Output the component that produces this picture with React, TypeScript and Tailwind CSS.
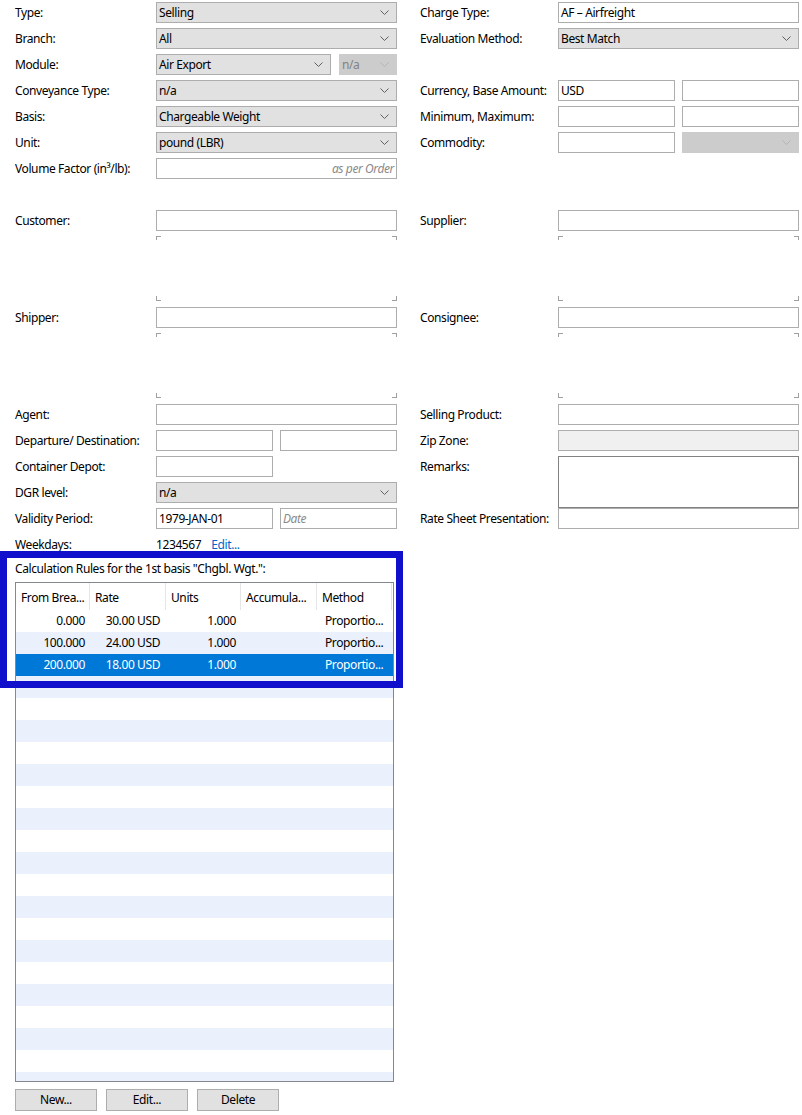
import React from "react";

const FONT = { fontFamily: '"Noto Sans", "Segoe UI", sans-serif', letterSpacing: "-0.4px" };

function Chevron({ light }: { light?: boolean }) {
    return (
        <svg width="9" height="5" viewBox="0 0 9 5" className="shrink-0">
            <path d="M0.5 0.5 L4.5 4.5 L8.5 0.5" fill="none" stroke={light ? "#b4b4b4" : "#606060"} strokeWidth="1" />
        </svg>
    );
}

function Label({ children }: { children: React.ReactNode }) {
    return <div className="w-[141px] shrink-0 h-[21px] flex items-center whitespace-nowrap">{children}</div>;
}

function RLabel({ children }: { children: React.ReactNode }) {
    return <div className="w-[138px] shrink-0 h-[21px] flex items-center whitespace-nowrap">{children}</div>;
}

function Select({ value, className = "w-[241px]" }: { value: string; className?: string }) {
    return (
        <div className={`${className} h-[21px] border border-[#adadad] bg-[#e1e1e1] flex items-center pl-[2px] pr-[7px]`}>
            <span className="flex-1 whitespace-nowrap">{value}</span>
            <Chevron />
        </div>
    );
}

function DisabledSelect({ value, className }: { value?: string; className: string }) {
    return (
        <div className={`${className} h-[21px] border border-[#cccccc] bg-[#cccccc] flex items-center pl-[2px] pr-[7px] text-[#838383]`}>
            <span className="flex-1">{value}</span>
            <Chevron light />
        </div>
    );
}

function Box({ value, className = "w-[241px]", placeholder, right, bg = "bg-white" }: { value?: string; className?: string; placeholder?: string; right?: boolean; bg?: string }) {
    return (
        <div className={`${className} h-[21px] border border-[#adadad] ${bg} flex items-center px-[2px] whitespace-nowrap ${right ? "justify-end" : ""}`}>
            {value ? <span>{value}</span> : placeholder ? <span className="italic text-[#8a8a8a]">{placeholder}</span> : null}
        </div>
    );
}

// empty list area under the party fields, only corner ticks are drawn
function Brackets() {
    return (
        <div className="w-[241px] h-[66px] relative">
            <div className="absolute left-0 top-0 w-[5px] h-[4px] border-l border-t border-[#a0a0a0]" />
            <div className="absolute right-0 top-0 w-[5px] h-[4px] border-r border-t border-[#a0a0a0]" />
            <div className="absolute left-0 top-[60px] w-[5px] h-[5px] border-l border-b border-[#a0a0a0]" />
            <div className="absolute right-0 top-[60px] w-[5px] h-[5px] border-r border-b border-[#a0a0a0]" />
        </div>
    );
}

const rules = [
    { from: "0.000", rate: "30.00 USD", units: "1.000", method: "Proportio..." },
    { from: "100.000", rate: "24.00 USD", units: "1.000", method: "Proportio..." },
    { from: "200.000", rate: "18.00 USD", units: "1.000", method: "Proportio..." },
];

const cols = ["w-[74px]", "w-[76px]", "w-[75px]", "w-[76px]", "w-[75px]"];

function RulesTable() {
    const selected = 2;
    const rows = [];
    for (let i = 0; i < 22; i++) {
        const r = rules[i];
        const isSel = i === selected;
        const bg = isSel ? "bg-[#0078d7] text-white" : i % 2 === 1 ? "bg-[#eaf1fd]" : "bg-white";
        rows.push(
            <div key={i} className={`flex h-[22px] items-center shrink-0 whitespace-nowrap ${bg}`}>
                {r && (
                    <>
                        <div className={`${cols[0]} text-right pr-[5px]`}>{r.from}</div>
                        <div className={`${cols[1]} text-right pr-[6px]`}>{r.rate}</div>
                        <div className={`${cols[2]} text-right pr-[5px]`}>{r.units}</div>
                        <div className={`${cols[3]}`}></div>
                        <div className={`${cols[4]} pl-[8px]`}>{r.method}</div>
                    </>
                )}
            </div>
        );
    }

    return (
        <div className="w-[379px] h-[500px] border border-[#828790] overflow-hidden flex flex-col">
            <div className="flex h-[27px] shrink-0 bg-white whitespace-nowrap">
                {["From Brea...", "Rate", "Units", "Accumula...", "Method"].map((h, i) => (
                    <div key={h} className={`${cols[i]} h-full flex items-center pt-[2px] pl-[5px] border-r border-[#e5e5e5]`}>{h}</div>
                ))}
            </div>
            {rows}
        </div>
    );
}

export default function App() {
    return (
        <div className="w-[802px] h-[1115px] relative bg-white text-[12px] text-black leading-[16px]" style={FONT}>
            <div className="flex pt-[2px]">
                {/* left column */}
                <div className="flex flex-col gap-[5px] pl-[15px] w-[397px]">
                    <div className="flex"><Label>Type:</Label><Select value="Selling" /></div>
                    <div className="flex"><Label>Branch:</Label><Select value="All" /></div>
                    <div className="flex">
                        <Label>Module:</Label>
                        <Select value="Air Export" className="w-[175px]" />
                        <DisabledSelect value="n/a" className="w-[58px] ml-[8px]" />
                    </div>
                    <div className="flex"><Label>Conveyance Type:</Label><Select value="n/a" /></div>
                    <div className="flex"><Label>Basis:</Label><Select value="Chargeable Weight" /></div>
                    <div className="flex"><Label>Unit:</Label><Select value="pound (LBR)" /></div>
                    <div className="flex"><Label>Volume Factor (in³/lb):</Label><Box placeholder="as per Order" right /></div>
                    <div className="h-[21px]" />
                    <div className="flex"><Label>Customer:</Label><Box /></div>
                    <div className="flex"><div className="w-[141px]" /><Brackets /></div>
                    <div className="flex"><Label>Shipper:</Label><Box /></div>
                    <div className="flex"><div className="w-[141px]" /><Brackets /></div>
                    <div className="flex"><Label>Agent:</Label><Box /></div>
                    <div className="flex">
                        <Label>Departure/ Destination:</Label>
                        <Box className="w-[117px]" />
                        <Box className="w-[117px] ml-[7px]" />
                    </div>
                    <div className="flex"><Label>Container Depot:</Label><Box className="w-[117px]" /></div>
                    <div className="flex"><Label>DGR level:</Label><Select value="n/a" /></div>
                    <div className="flex">
                        <Label>Validity Period:</Label>
                        <Box value="1979-JAN-01" className="w-[117px]" />
                        <Box placeholder="Date" className="w-[117px] ml-[7px]" />
                    </div>
                    <div className="flex">
                        <Label>Weekdays:</Label>
                        <div className="h-[21px] flex items-center gap-[10px]">
                            <span>1234567</span>
                            <span className="text-[#0066cc]">Edit...</span>
                        </div>
                    </div>
                </div>

                {/* right column */}
                <div className="flex flex-col gap-[5px] pl-[23px] w-[405px]">
                    <div className="flex"><RLabel>Charge Type:</RLabel><Box value="AF – Airfreight" /></div>
                    <div className="flex"><RLabel>Evaluation Method:</RLabel><Select value="Best Match" /></div>
                    <div className="h-[21px]" />
                    <div className="flex">
                        <RLabel>Currency, Base Amount:</RLabel>
                        <Box value="USD" className="w-[117px]" />
                        <Box className="w-[117px] ml-[7px]" />
                    </div>
                    <div className="flex">
                        <RLabel>Minimum, Maximum:</RLabel>
                        <Box className="w-[117px]" />
                        <Box className="w-[117px] ml-[7px]" />
                    </div>
                    <div className="flex">
                        <RLabel>Commodity:</RLabel>
                        <Box className="w-[117px]" />
                        <DisabledSelect className="w-[117px] ml-[7px]" />
                    </div>
                    <div className="h-[21px]" />
                    <div className="h-[21px]" />
                    <div className="flex"><RLabel>Supplier:</RLabel><Box /></div>
                    <div className="flex"><div className="w-[138px]" /><Brackets /></div>
                    <div className="flex"><RLabel>Consignee:</RLabel><Box /></div>
                    <div className="flex"><div className="w-[138px]" /><Brackets /></div>
                    <div className="flex"><RLabel>Selling Product:</RLabel><Box /></div>
                    <div className="flex"><RLabel>Zip Zone:</RLabel><Box bg="bg-[#f0f0f0]" /></div>
                    <div className="flex flex-col">
                        <div className="flex">
                            <RLabel>Remarks:</RLabel>
                            <div className="w-[241px] h-[52px] border border-[#828282] bg-white" />
                        </div>
                        <div className="flex"><RLabel>Rate Sheet Presentation:</RLabel><Box /></div>
                    </div>
                </div>
            </div>

            {/* calculation rules */}
            <div className="pl-[15px] pt-[3px]">
                <div className="h-[21px] flex items-center">Calculation Rules for the 1st basis "Chgbl. Wgt.":</div>
                <div className="mt-[3px]"><RulesTable /></div>
                <div className="flex gap-[9px] mt-[7px]">
                    {["New...", "Edit...", "Delete"].map(b => (
                        <button key={b} className="w-[82px] h-[22px] border border-[#adadad] bg-[#e1e1e1] flex items-center justify-center">{b}</button>
                    ))}
                </div>
            </div>

            {/* highlight frame */}
            <div className="absolute left-0 top-[551px] w-[403px] h-[137px] border-[7px] border-[#1010cc] pointer-events-none" />
        </div>
    );
}
